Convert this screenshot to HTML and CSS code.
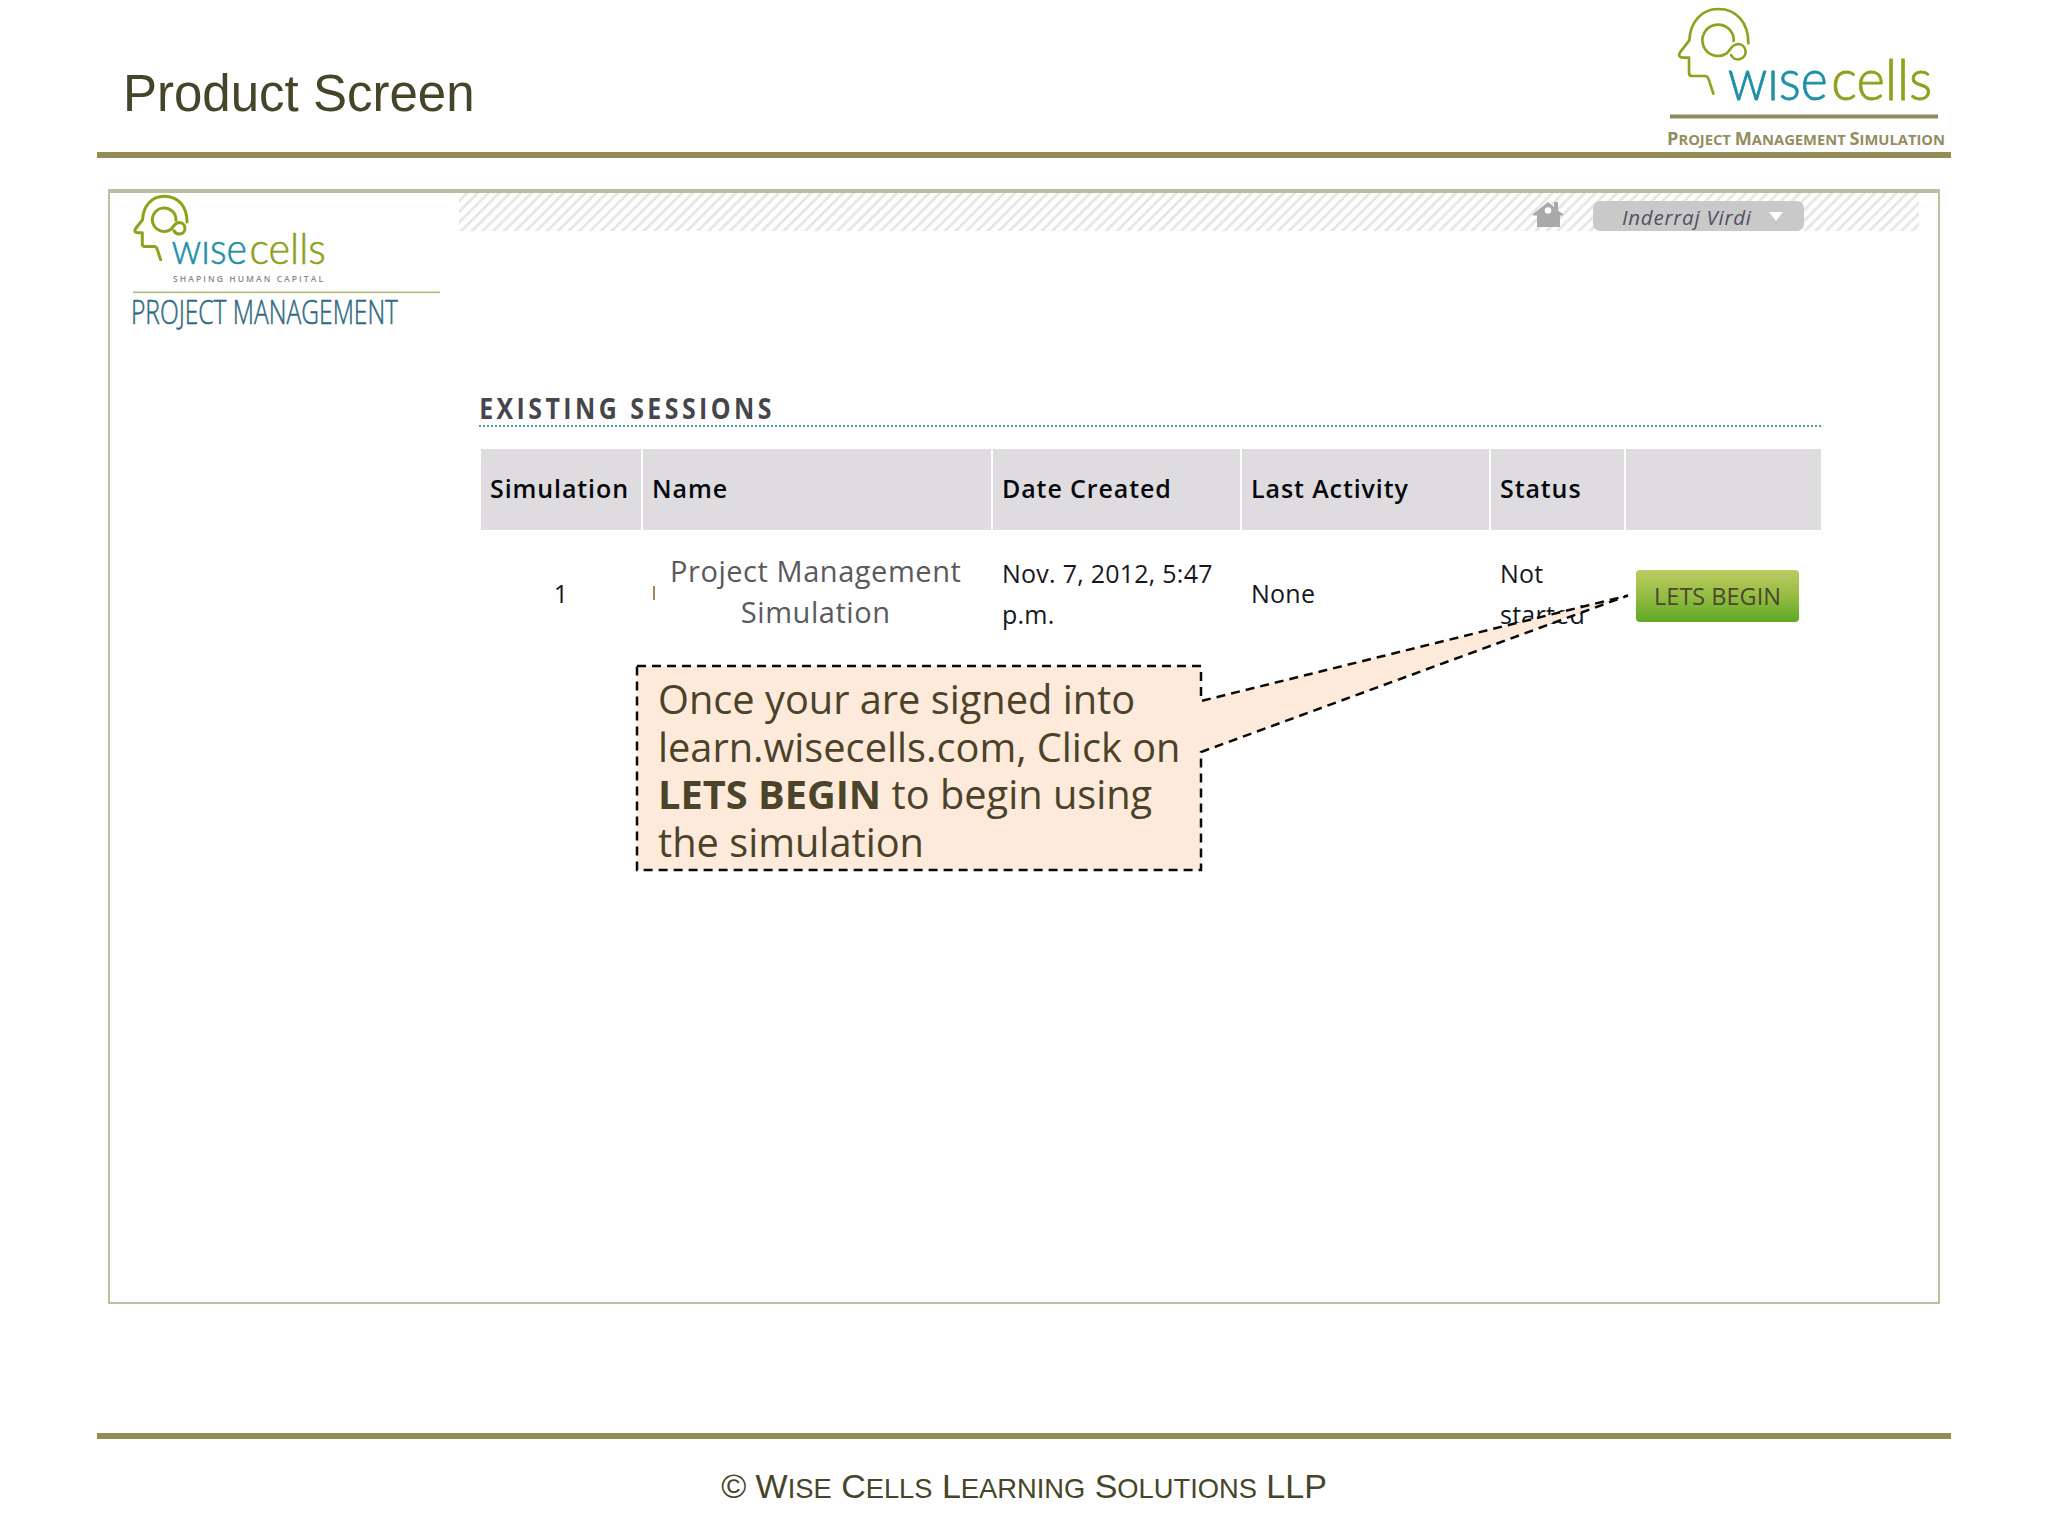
FILE: index.html
```html
<!DOCTYPE html>
<html lang="en">
<head>
<meta charset="utf-8">
<title>Product Screen</title>
<link rel="stylesheet" href="styles.css">
</head>
<body>
<svg class="defs" aria-hidden="true">
  <symbol id="logo" viewBox="110 18 770 290" preserveAspectRatio="none">
    <g class="head">
      <path d="M325 130C325 68 290 27 235 27C181 27 150 70 148 121L120 157C114 167 119 173 130 173H147V218Q147 228 157 228H194Q203 228 206 238L220 281"/>
      <path d="M281 123A47 47 0 1 0 260 160C272 150 274 133 294 132A23 23 0 1 1 273 165"/>
    </g>
    <text class="word teal" x="263" y="299" textLength="300" lengthAdjust="spacingAndGlyphs">wıse</text>
    <text class="word olive" x="574" y="299" textLength="303" lengthAdjust="spacingAndGlyphs">cells</text>
  </symbol>
</svg>
<div class="slide">
  <header class="top">
    <h1>Product Screen</h1>
    <svg class="brand" viewBox="0 0 300 152" role="img" aria-label="Wise Cells">
      <use href="#logo" x="16.7" y="6" width="256.6" height="96.7"/>
      <rect x="10" y="114.5" width="268" height="4" fill="#8f8b5f"/>
      <text class="caption" x="7" y="145.3" textLength="278" lengthAdjust="spacingAndGlyphs"><tspan class="cap">P</tspan>ROJECT <tspan class="cap">M</tspan>ANAGEMENT <tspan class="cap">S</tspan>IMULATION</text>
    </svg>
  </header>
  <div class="rule"></div>

  <main class="screen">
    <aside class="side">
      <svg class="sidelogo" viewBox="0 0 310 142" role="img" aria-label="Wise Cells, Project Management">
        <use class="small" href="#logo" x="0" y="0" width="193.500" height="72.500"/>
        <text class="tag" x="40" y="88" textLength="150">SHAPING HUMAN CAPITAL</text>
        <rect x="0" y="97.500" width="307" height="1.6" fill="#b5bd80"/>
        <text class="product" x="-2" y="129.500" textLength="267" lengthAdjust="spacingAndGlyphs">PROJECT MANAGEMENT</text>
      </svg>
    </aside>
    <section class="content">
      <nav class="bar">
        <svg class="home" viewBox="0 0 30 26"><path d="M15 1L21 6V1H25V9.500L30 13V14.500H27V26H4V14.500H0V13Z" fill="#a9a9a9"/><circle cx="15" cy="9.500" r="3.300" fill="#fff"/></svg>
        <div class="user"><span>Inderraj Virdi</span><i class="caret"></i></div>
      </nav>
      <svg class="heading" viewBox="0 0 300 30"><text transform="scale(.86 1)" x="-1" y="24" textLength="340">EXISTING SESSIONS</text></svg>
      <div class="dots"></div>
      <div class="grid thead">
        <div>Simulation</div><div>Name</div><div>Date Created</div><div>Last Activity</div><div>Status</div><div></div>
      </div>
      <div class="grid row">
        <div class="num">1</div>
        <div class="name"><i class="sliver"></i><span>Project Management<br>Simulation</span></div>
        <div>Nov. 7, 2012, 5:47<br>p.m.</div>
        <div class="none">None</div>
        <div>Not<br>started</div>
        <div class="action"><button>LETS BEGIN</button></div>
      </div>
    </section>
  </main>

  <div class="callout">
    <svg viewBox="0 0 1000 284"><path d="M3 76H567V111L994 5.500L567 162V280H3Z"/></svg>
    <p>Once your are signed into<br>learn.wisecells.com, Click on<br><b>LETS BEGIN</b> to begin using<br>the simulation</p>
  </div>

  <div class="rule bottom"></div>
  <footer>© W<small>ISE</small> C<small>ELLS</small> L<small>EARNING</small> S<small>OLUTIONS</small> LLP</footer>
</div>
</body>
</html>
```
FILE: styles.css
```css
* { box-sizing: border-box; }
body { margin: 0; background: #fefefe; font-family: "Open Sans", sans-serif; }
.defs { position: absolute; width: 0; height: 0; }
.slide { position: relative; width: 2048px; height: 1536px; overflow: hidden; padding: 0 97px; }

.top { display: flex; justify-content: space-between; height: 152px; padding-left: 26px; }
h1 { margin: 64px 0 0; font: 400 51px/60px "Liberation Sans", Arial, sans-serif; color: #46452a; white-space: nowrap; }
.brand { --line: 8; width: 300px; height: 152px; margin-right: -9px; }
.small { --line: 12; }
.head path { fill: none; stroke: #8ea21c; stroke-width: var(--line, 8); stroke-linecap: round; stroke-linejoin: round; }
.word { font-family: Lato, sans-serif; font-weight: 300; font-size: 174px; stroke-width: 2.5; }
.teal { fill: #1f90a8; stroke: #1f90a8; }
.olive { fill: #8ea21c; stroke: #8ea21c; }
.caption { font: 700 14.4px "Open Sans", sans-serif; fill: #928e60; }
.caption .cap { font-size: 17.8px; }
.rule { height: 6px; background: #938c56; }

.screen { display: flex; width: 1832px; height: 1115px; margin: 31px 0 0 11px; border: 2px solid #bcc19c; border-top: 4px solid #babda2; }
.side { width: 349px; padding: 1px 0 0 23px; }
.sidelogo { display: block; width: 310px; height: 142px; overflow: visible; }
.tag { font: 600 8.5px "Open Sans", sans-serif; fill: #8b8788; }
.product { font: 300 33px "Open Sans", sans-serif; fill: #2f6880; stroke: #2f6880; stroke-width: .5; }
.content { width: 1460px; }
.bar { display: flex; align-items: flex-start; height: 38px; padding-left: 1074px; background: repeating-linear-gradient(135deg, #fefefe 0 3.6px, #e8e5e3 5px 6.4px, #fefefe 7.6px); }
.home { width: 30px; height: 26px; margin-top: 8px; }
.user { display: flex; align-items: center; width: 211px; height: 30px; margin: 8px 0 0 30px; padding-left: 29px; border-radius: 7px; background: #c9c9c9; color: #515160; font-size: 20.5px; font-style: italic; line-height: 30px; letter-spacing: .75px; white-space: nowrap; }
.user span { width: 147px; padding-top: 2px; }
.caret { border: 7px solid transparent; border-top: 9px solid #fff; border-bottom: 0; }
.heading { display: block; width: 300px; height: 30px; margin: 164px 0 0 21px; overflow: visible; }
.heading text { font: 700 29px "Open Sans", sans-serif; fill: #45464b; }
.dots { width: 1343px; height: 2px; margin: 0 0 22px 20px; background: repeating-linear-gradient(90deg, #4fa1a1 0 2px, #fefefe 2px 4px); }
.grid { display: grid; grid-template-columns: 160px 348px 247px 247px 133px 195px; column-gap: 2px; width: 1340px; margin-left: 22px; color: #17171f; font-size: 25px; letter-spacing: .25px; white-space: nowrap; }
.thead > div { height: 81px; padding-left: 9px; background: #dedcde; font-weight: 600; line-height: 79px; letter-spacing: .9px; color: #08080f; }
.row { align-items: center; padding-top: 23px; line-height: 41px; }
.row > div { padding-left: 9px; }
.row .num { margin-top: -2px; padding: 0; text-align: center; }
.row .none { margin-top: -2px; }
.row .name { display: flex; align-items: center; margin-top: -7px; padding: 0 0 0 10px; color: #5a595d; font-size: 29px; letter-spacing: .55px; text-align: center; }
.sliver { width: 2px; height: 14px; margin: 4px 15px 0 0; background: #a3875f; }
.row .action { padding: 4px 0 0 10px; }
button { display: block; width: 163px; height: 52px; padding: 0; border: 0; border-radius: 4px; background: linear-gradient(#bdcb62, #94bd42 50%, #5fa826); color: #4c4733; font: 400 23.5px/50px "Open Sans", sans-serif; }

.callout { position: absolute; left: 634px; top: 590px; width: 1000px; height: 284px; }
.callout svg { position: absolute; inset: 0; width: 1000px; height: 284px; }
.callout path { fill: #fdeadb; stroke: #0b0b08; stroke-width: 2.5; stroke-dasharray: 9 6; }
.callout p { position: relative; margin: 0; padding: 86px 0 0 24px; color: #4b4329; font-size: 39.75px; line-height: 47.7px; white-space: nowrap; }
.callout b { color: #4a4429; }

.bottom { margin-top: 129px; }
footer { margin-top: 25px; text-align: center; font: 400 34px/44px "Liberation Sans", Arial, sans-serif; color: #46452a; white-space: nowrap; }
footer small { font-size: 27.3px; }
```
